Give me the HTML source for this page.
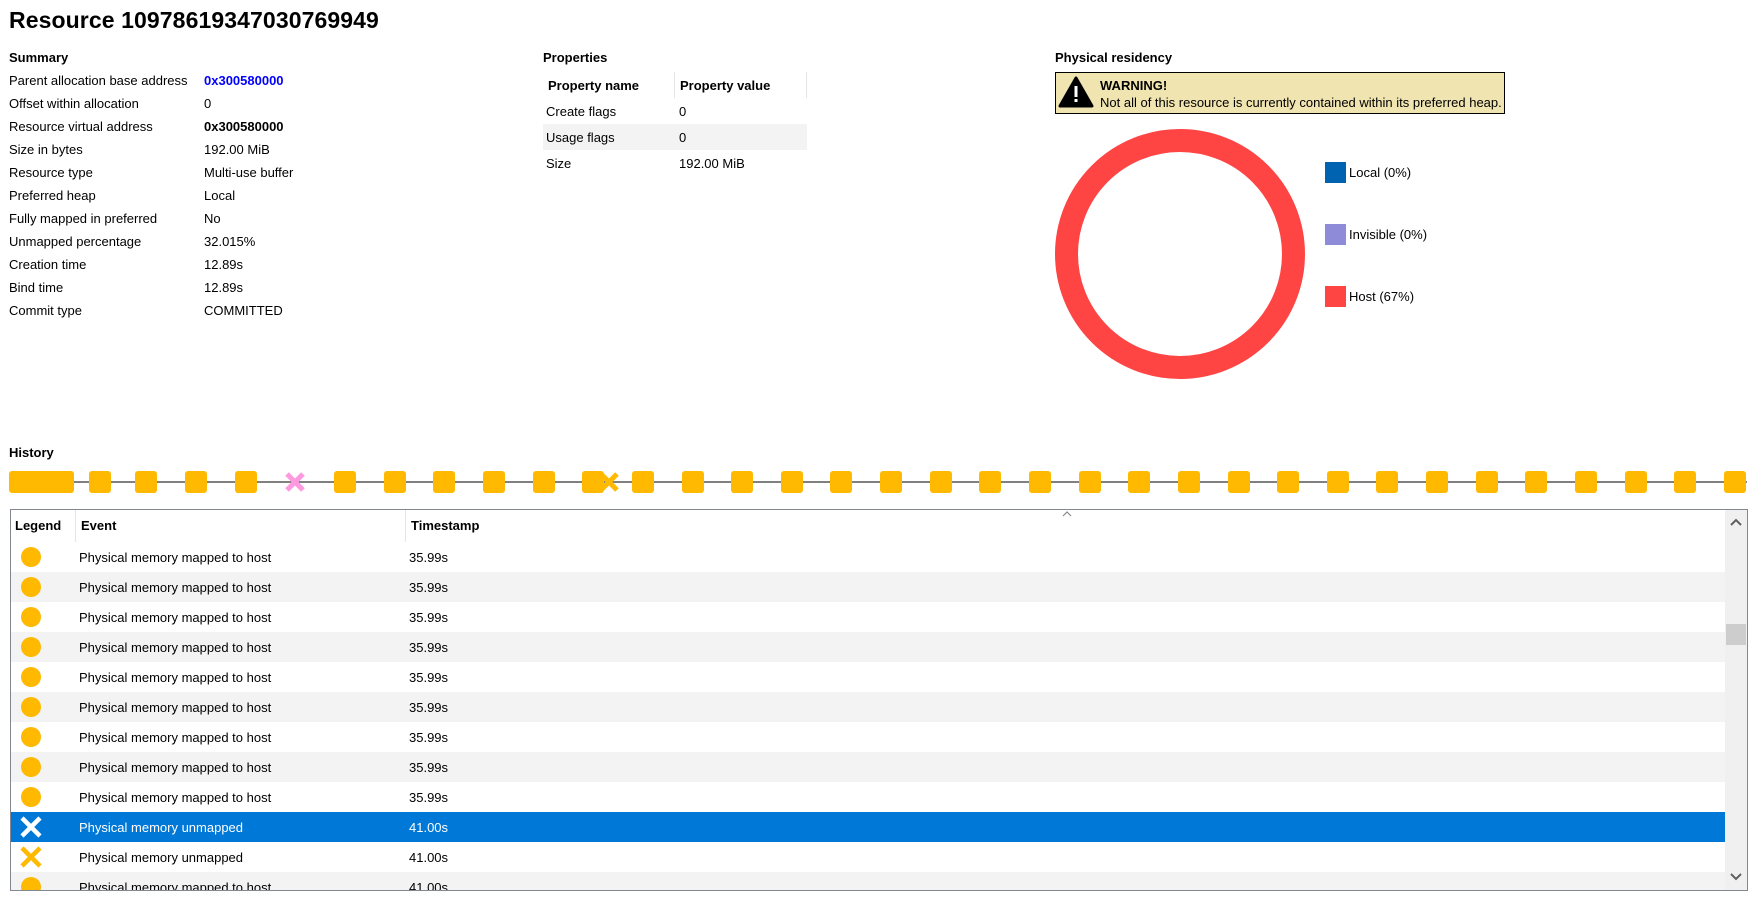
<!DOCTYPE html>
<html><head><meta charset="utf-8"><style>
*{margin:0;padding:0;box-sizing:border-box}
body{width:1753px;height:898px;overflow:hidden;background:#fff;font-family:"Liberation Sans",sans-serif;font-size:13px;color:#000;position:relative}
.a{position:absolute;white-space:nowrap}
.b{font-weight:bold}
.m{position:absolute;top:471px;width:22px;height:22px;background:#ffb900;border-radius:3px}
.row{position:absolute;left:11px;width:1714px;height:30px}
.row .ic{position:absolute;left:10px;top:5px;width:20px;height:20px;border-radius:50%;background:#ffb900}
.row .ev{position:absolute;left:68px;top:8px}
.row .ts{position:absolute;left:398px;top:8px}
.g{background:#f3f3f3}
</style></head><body>
<div class="a b" style="left:9px;top:7px;font-size:23px;letter-spacing:0.1px">Resource 10978619347030769949</div>

<div class="a b" style="left:9px;top:50px">Summary</div>
<div class="a" style="left:9px;top:73px">Parent allocation base address</div><div class="a b" style="left:204px;top:73px;color:#0000ff">0x300580000</div>
<div class="a" style="left:9px;top:96px">Offset within allocation</div><div class="a" style="left:204px;top:96px">0</div>
<div class="a" style="left:9px;top:119px">Resource virtual address</div><div class="a b" style="left:204px;top:119px">0x300580000</div>
<div class="a" style="left:9px;top:142px">Size in bytes</div><div class="a" style="left:204px;top:142px">192.00 MiB</div>
<div class="a" style="left:9px;top:165px">Resource type</div><div class="a" style="left:204px;top:165px">Multi-use buffer</div>
<div class="a" style="left:9px;top:188px">Preferred heap</div><div class="a" style="left:204px;top:188px">Local</div>
<div class="a" style="left:9px;top:211px">Fully mapped in preferred</div><div class="a" style="left:204px;top:211px">No</div>
<div class="a" style="left:9px;top:234px">Unmapped percentage</div><div class="a" style="left:204px;top:234px">32.015%</div>
<div class="a" style="left:9px;top:257px">Creation time</div><div class="a" style="left:204px;top:257px">12.89s</div>
<div class="a" style="left:9px;top:280px">Bind time</div><div class="a" style="left:204px;top:280px">12.89s</div>
<div class="a" style="left:9px;top:303px">Commit type</div><div class="a" style="left:204px;top:303px">COMMITTED</div>

<div class="a b" style="left:543px;top:50px">Properties</div>
<div class="a" style="left:674px;top:72px;width:1px;height:26px;background:#e5e5e5"></div>
<div class="a" style="left:806px;top:72px;width:1px;height:26px;background:#e5e5e5"></div>
<div class="a b" style="left:548px;top:78px">Property name</div>
<div class="a b" style="left:680px;top:78px">Property value</div>
<div class="a" style="left:546px;top:104px">Create flags</div><div class="a" style="left:679px;top:104px">0</div>
<div class="a" style="left:543px;top:124px;width:264px;height:26px;background:#f3f3f3"></div>
<div class="a" style="left:546px;top:130px">Usage flags</div><div class="a" style="left:679px;top:130px">0</div>
<div class="a" style="left:546px;top:156px">Size</div><div class="a" style="left:679px;top:156px">192.00 MiB</div>

<div class="a b" style="left:1055px;top:50px">Physical residency</div>
<div class="a" style="left:1055px;top:72px;width:450px;height:42px;background:#f0e4b0;border:1px solid #000"></div>
<svg class="a" style="left:1058px;top:76px" width="36" height="32" viewBox="0 0 36 32"><path d="M18 2 L34 30 L2 30 Z" fill="#000" stroke="#000" stroke-width="3" stroke-linejoin="round"/><rect x="16.5" y="10" width="3" height="11" fill="#fff"/><rect x="16.5" y="23" width="3" height="3" fill="#fff"/></svg>
<div class="a b" style="left:1100px;top:78px">WARNING!</div>
<div class="a" style="left:1100px;top:95px">Not all of this resource is currently contained within its preferred heap.</div>
<svg class="a" style="left:1055px;top:129px" width="250" height="250"><circle cx="125" cy="125" r="113.5" fill="none" stroke="#ff4444" stroke-width="23"/></svg>
<div class="a" style="left:1325px;top:162px;width:21px;height:21px;background:#0063b1"></div><div class="a" style="left:1349px;top:165px">Local (0%)</div>
<div class="a" style="left:1325px;top:224px;width:21px;height:21px;background:#8e8cd8"></div><div class="a" style="left:1349px;top:227px">Invisible (0%)</div>
<div class="a" style="left:1325px;top:286px;width:21px;height:21px;background:#ff4444"></div><div class="a" style="left:1349px;top:289px">Host (67%)</div>

<div class="a b" style="left:9px;top:445px">History</div>
<div class="a" style="left:9px;top:481px;width:1738px;height:2px;background:#808080"></div>
<div class="m" style="left:9px"></div><div class="m" style="left:25px"></div><div class="m" style="left:40px"></div><div class="m" style="left:52px"></div><div class="m" style="left:89px"></div>
<div class="m" style="left:135px"></div><div class="m" style="left:185px"></div><div class="m" style="left:235px"></div>
<svg class="a" style="left:284px;top:471px" width="22" height="22"><path d="M3 3L19 19M19 3L3 19" stroke="#ff99e0" stroke-width="5"/></svg>
<div class="m" style="left:334px"></div><div class="m" style="left:384px"></div><div class="m" style="left:433px"></div><div class="m" style="left:483px"></div><div class="m" style="left:533px"></div><div class="m" style="left:582px"></div>
<svg class="a" style="left:598px;top:471px" width="22" height="22"><path d="M3 3L19 19M19 3L3 19" stroke="#ffb900" stroke-width="5"/></svg>
<div class="m" style="left:632px"></div><div class="m" style="left:682px"></div><div class="m" style="left:731px"></div><div class="m" style="left:781px"></div><div class="m" style="left:830px"></div><div class="m" style="left:880px"></div><div class="m" style="left:930px"></div><div class="m" style="left:979px"></div><div class="m" style="left:1029px"></div><div class="m" style="left:1079px"></div><div class="m" style="left:1128px"></div><div class="m" style="left:1178px"></div><div class="m" style="left:1228px"></div><div class="m" style="left:1277px"></div><div class="m" style="left:1327px"></div><div class="m" style="left:1376px"></div><div class="m" style="left:1426px"></div><div class="m" style="left:1476px"></div><div class="m" style="left:1525px"></div><div class="m" style="left:1575px"></div><div class="m" style="left:1625px"></div><div class="m" style="left:1674px"></div><div class="m" style="left:1724px"></div>

<div class="a" style="left:10px;top:509px;width:1738px;height:382px;border:1px solid #828790;overflow:hidden">
 <div class="a" style="left:0;top:0;width:1714px;height:32px;background:#fff"></div>
 <div class="a" style="left:64px;top:0;width:1px;height:32px;background:#e5e5e5"></div>
 <div class="a" style="left:394px;top:0;width:1px;height:32px;background:#e5e5e5"></div>
 <div class="a b" style="left:4px;top:8px">Legend</div>
 <div class="a b" style="left:70px;top:8px">Event</div>
 <div class="a b" style="left:400px;top:8px">Timestamp</div>
 <svg class="a" style="left:1050px;top:0" width="12" height="8"><path d="M2 6L6 2L10 6" stroke="#888" fill="none" stroke-width="1.2"/></svg>
 <div class="a" style="left:1714px;top:0;width:22px;height:380px;background:#f0f0f0"></div>
 <svg class="a" style="left:1718px;top:7px" width="14" height="10"><path d="M2 8L7 3L12 8" stroke="#606060" fill="none" stroke-width="2"/></svg>
 <svg class="a" style="left:1718px;top:362px" width="14" height="10"><path d="M2 2L7 7L12 2" stroke="#606060" fill="none" stroke-width="2"/></svg>
 <div class="a" style="left:1715px;top:114px;width:20px;height:21px;background:#cdcdcd"></div>
</div>
<div class="row" style="top:542px"><div class="ic"></div><div class="ev">Physical memory mapped to host</div><div class="ts">35.99s</div></div>
<div class="row g" style="top:572px"><div class="ic"></div><div class="ev">Physical memory mapped to host</div><div class="ts">35.99s</div></div>
<div class="row" style="top:602px"><div class="ic"></div><div class="ev">Physical memory mapped to host</div><div class="ts">35.99s</div></div>
<div class="row g" style="top:632px"><div class="ic"></div><div class="ev">Physical memory mapped to host</div><div class="ts">35.99s</div></div>
<div class="row" style="top:662px"><div class="ic"></div><div class="ev">Physical memory mapped to host</div><div class="ts">35.99s</div></div>
<div class="row g" style="top:692px"><div class="ic"></div><div class="ev">Physical memory mapped to host</div><div class="ts">35.99s</div></div>
<div class="row" style="top:722px"><div class="ic"></div><div class="ev">Physical memory mapped to host</div><div class="ts">35.99s</div></div>
<div class="row g" style="top:752px"><div class="ic"></div><div class="ev">Physical memory mapped to host</div><div class="ts">35.99s</div></div>
<div class="row" style="top:782px"><div class="ic"></div><div class="ev">Physical memory mapped to host</div><div class="ts">35.99s</div></div>
<div class="row" style="top:812px;background:#0078d7;color:#fff"><svg class="a" style="left:8px;top:4px" width="24" height="22"><path d="M3 2L21 20M21 2L3 20" stroke="#fff" stroke-width="4.5"/></svg><div class="ev">Physical memory unmapped</div><div class="ts">41.00s</div></div>
<div class="row" style="top:842px"><svg class="a" style="left:8px;top:4px" width="24" height="22"><path d="M3 2L21 20M21 2L3 20" stroke="#ffb900" stroke-width="4.5"/></svg><div class="ev">Physical memory unmapped</div><div class="ts">41.00s</div></div>
<div class="row g" style="top:872px;height:18px;overflow:hidden"><div class="ic"></div><div class="ev">Physical memory mapped to host</div><div class="ts">41.00s</div></div>
<div class="a" style="left:10px;top:890px;width:1738px;height:1px;background:#828790"></div>
</body></html>
